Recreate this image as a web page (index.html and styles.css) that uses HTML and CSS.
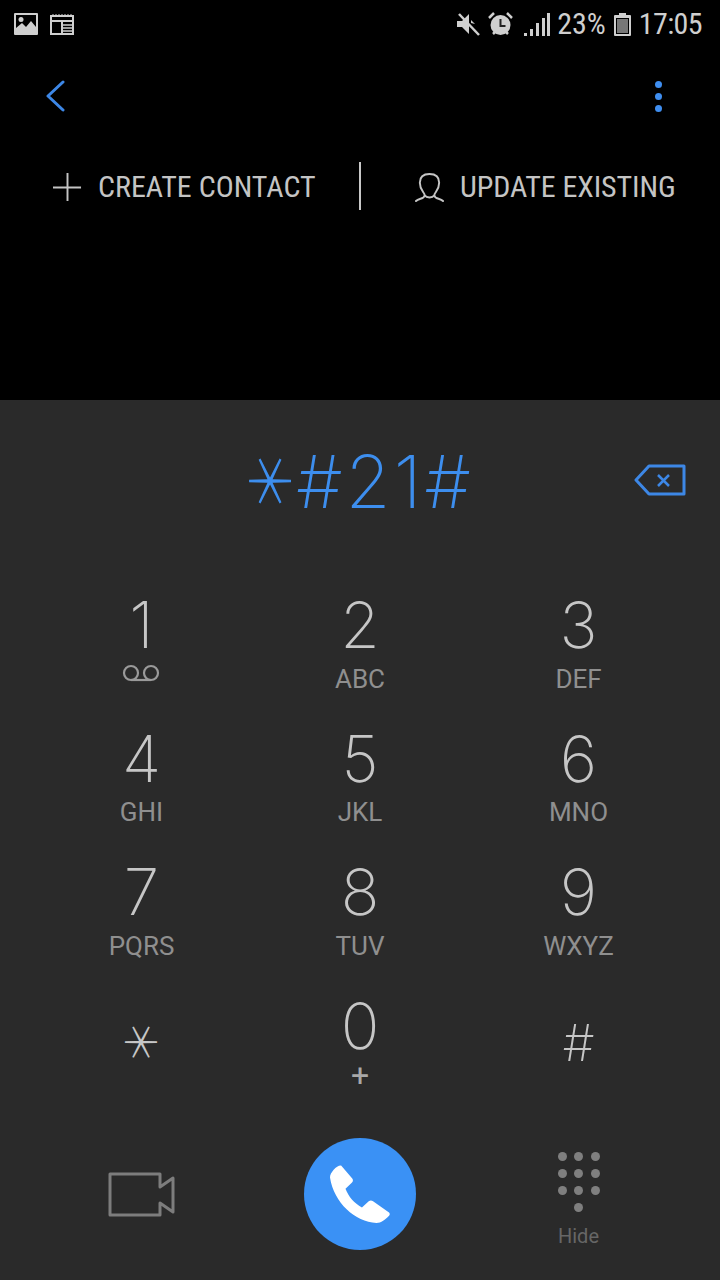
FILE: index.html
```html
<!DOCTYPE html>
<html lang="en">
<head>
<meta charset="utf-8">
<title>Phone</title>
<link rel="stylesheet" href="styles.css">
</head>
<body>
<main class="phone">
  <section class="top">
    <header class="status">
      <div class="status-group status-left">
        <svg class="ic-pic" viewBox="0 0 24 22"><path fill="#cfcfcf" fill-rule="evenodd" d="M1 0h22a1 1 0 0 1 1 1v20a1 1 0 0 1-1 1H1a1 1 0 0 1-1-1V1a1 1 0 0 1 1-1zM2 2v13l6-5 4 4 5-6 5 6V2z"/><circle cx="7" cy="6.500" r="2.500" fill="#cfcfcf"/></svg>
        <svg class="ic-news" viewBox="0 0 24 21"><g fill="none" stroke="#cfcfcf" stroke-width="2"><rect x="1" y="2" width="22" height="18"/><path d="M1 7h22M12 7v13"/></g><path stroke="#cfcfcf" stroke-width="1.500" d="M13 11h9M13 14h9M13 17h9"/><path stroke="#cfcfcf" stroke-width="1" d="M3 0v2M6 0v2M9 0v2M12 0v2M15 0v2M18 0v2M21 0v2"/></svg>
      </div>
      <div class="status-group status-right">
        <svg class="ic-mute" viewBox="0 0 23 23"><path fill="#cfcfcf" d="M0 8h5l7-7v20l-7-7H0zM14 7l4 4-4-1z"/><path stroke="#cfcfcf" stroke-width="2.500" d="M2 1l20 21"/></svg>
        <svg class="ic-alarm" viewBox="0 0 25 24"><circle cx="12.500" cy="13" r="10" fill="#cfcfcf"/><path fill="none" stroke="#222" stroke-width="2" d="M12.500 7v7h5"/><path fill="none" stroke="#cfcfcf" stroke-width="2.500" d="M1 6l5-5M24 6l-5-5M5 22l2-2M20 22l-2-2"/></svg>
        <svg class="ic-signal" viewBox="0 0 26 23"><path fill="#cfcfcf" d="M0 20h3v3H0zM6 16h3v7H6zM12 10h3v13h-3zM18 5h3v18h-3zM23 0h3v23h-3z"/></svg>
        <span class="status-text pct">23%</span>
        <svg class="ic-batt" viewBox="0 0 17 23"><path fill="#cfcfcf" fill-rule="evenodd" d="M5 0h7v2h4a1 1 0 0 1 1 1v19a1 1 0 0 1-1 1H1a1 1 0 0 1-1-1V3a1 1 0 0 1 1-1h4zM2 5v16h13V5z"/><rect x="3" y="6" width="11" height="14" fill="#777"/></svg>
        <span class="status-text time">17:05</span>
      </div>
    </header>
    <nav class="toolbar">
      <svg class="ic-back" viewBox="0 0 20 32"><path fill="none" stroke="#3d87e6" stroke-width="3" stroke-linecap="round" stroke-linejoin="round" d="M18 2L3 16l15 14"/></svg>
      <div class="more"><i></i><i></i><i></i></div>
    </nav>
    <div class="actions">
      <div class="action action-create">
        <svg class="ic-plus" viewBox="0 0 30 30"><path stroke="#c4c4c4" stroke-width="2" d="M0 15h29M15 0v29"/></svg>
        <span>CREATE CONTACT</span>
      </div>
      <div class="divider"></div>
      <div class="action action-update">
        <svg class="ic-person" viewBox="0 0 30 30"><path fill="none" stroke="#c4c4c4" stroke-width="2" stroke-linecap="round" d="M1 29C4 26 10 27 10 23 10 20 5 18 5 10 5 4 9 1 15 1 21 1 25 4 25 10 25 18 20 20 20 23 20 27 26 26 29 29M10 23C12 26 18 26 20 23"/></svg>
        <span>UPDATE EXISTING</span>
      </div>
    </div>
  </section>
  <section class="dialer">
    <div class="display">
      <div class="number"><span class="star star-big">＊</span><span class="number-text">#21#</span></div>
      <svg class="ic-del" viewBox="0 0 52 32"><g fill="none" stroke="#3d87e6" stroke-width="3" stroke-linejoin="round"><path d="M15 2h35v28H15L2 16z"/><path stroke-width="2.500" d="M24 11l11 11M35 11L24 22"/></g></svg>
    </div>
    <div class="keypad">
      <div class="key"><div class="digit">1</div><div class="sub"><svg class="ic-vm" viewBox="0 0 38 18"><g fill="none" stroke="#9a9a9a" stroke-width="2.200"><circle cx="9" cy="9" r="7"/><circle cx="29" cy="9" r="7"/><path d="M9 16h20"/></g></svg></div></div>
      <div class="key"><div class="digit">2</div><div class="sub">ABC</div></div>
      <div class="key"><div class="digit">3</div><div class="sub">DEF</div></div>
      <div class="key"><div class="digit">4</div><div class="sub">GHI</div></div>
      <div class="key"><div class="digit">5</div><div class="sub">JKL</div></div>
      <div class="key"><div class="digit">6</div><div class="sub">MNO</div></div>
      <div class="key"><div class="digit">7</div><div class="sub">PQRS</div></div>
      <div class="key"><div class="digit">8</div><div class="sub">TUV</div></div>
      <div class="key"><div class="digit">9</div><div class="sub">WXYZ</div></div>
      <div class="key"><div class="symbol"><span class="star star-key">＊</span></div></div>
      <div class="key"><div class="digit">0</div><div class="sub plus">+</div></div>
      <div class="key"><div class="symbol">#</div></div>
    </div>
    <div class="bottom">
      <div class="slot">
        <svg class="ic-video" viewBox="0 0 67 45"><path fill="none" stroke="#7d7d7d" stroke-width="3" stroke-linejoin="round" d="M2 2H52V15L65 6V40L52 31V43H2Z"/></svg>
      </div>
      <div class="slot">
        <div class="call">
          <svg class="ic-phone" viewBox="0 0 62 62"><path fill="#fff" d="M11.700 1.700L23 15c1 1.500 1 3-.5 4.500L16 25.700c3 8 9 15 17 19.300l7-6.500c1.500-1 3-1 4.500 0L61 50c1 1 1 2.500 0 3.500-4 4-8 7.500-13 7.500C26 60 4 40 0 14 0 9 7 1 11.700 1.700z"/></svg>
        </div>
      </div>
      <div class="slot hide">
        <div class="dots"><i></i><i></i><i></i><i></i><i></i><i></i><i></i><i></i><i></i><i class="last"></i></div>
        <div class="hide-label">Hide</div>
      </div>
    </div>
  </section>
</main>
</body>
</html>
```

FILE: styles.css
```css
* { box-sizing: border-box; }
html, body { margin: 0; padding: 0; background: #000; }
body { width: 720px; height: 1280px; overflow: hidden; font-family: Roboto, "Liberation Sans", sans-serif; }
.phone { width: 720px; height: 1280px; display: flex; flex-direction: column; }
svg { display: block; flex: none; }

.top { height: 400px; background: #000; }
.status { height: 48px; display: flex; justify-content: space-between; align-items: center; padding: 0 18px 0 14px; }
.status-group { display: flex; align-items: center; }
.status-left { gap: 12px; }
.ic-pic { width: 24px; height: 22px; }
.ic-news { width: 24px; height: 21px; }
.ic-mute { width: 23px; height: 23px; margin-right: 8px; }
.ic-alarm { width: 25px; height: 24px; margin-right: 11px; }
.ic-signal { width: 26px; height: 23px; margin-right: 7px; }
.ic-batt { width: 17px; height: 23px; margin: 0 8px; }
.status-text { font-size: 30px; line-height: 48px; color: #cfcfcf; font-stretch: 75%; }
.time { letter-spacing: -0.6px; }

.toolbar { height: 96px; display: flex; justify-content: space-between; align-items: center; padding: 0 58px 0 45px; }
.ic-back { width: 20px; height: 32px; }
.more { display: flex; flex-direction: column; gap: 5px; }
.more i { width: 7px; height: 7px; border-radius: 50%; background: #3f8ef0; }

.actions { height: 84px; display: grid; grid-template-columns: 1fr 2px 1fr; align-items: center; }
.action { display: flex; align-items: center; color: #c4c4c4; font-size: 30px; line-height: 36px; font-stretch: 75%; padding-top: 2px; }
.action-create { padding-left: 53px; gap: 16px; }
.action-update { padding-left: 54px; gap: 16px; letter-spacing: -0.1px; }
.ic-plus { width: 29px; height: 29px; }
.ic-person { width: 29px; height: 29px; }
.divider { width: 2px; height: 48px; background: #c8c8c8; }

.dialer { flex: 1; background: #2a2a2a; }
.display { height: 164px; position: relative; display: flex; align-items: center; justify-content: center; }
.number { display: flex; align-items: center; margin-left: 3px; font-family: Inter, Roboto, sans-serif; font-weight: 200; font-size: 73px; color: #3d8eee; line-height: 100px; }
.number-text { letter-spacing: 3px; }
.star { display: flex; align-items: center; justify-content: center; line-height: 1; font-family: "Noto Sans CJK SC", sans-serif; font-weight: 300; }
.star-big { width: 42px; height: 42px; margin-right: 5px; font-size: 55px; transform: translate(3.500px, -1px) rotate(90deg) scaleX(1.2); }
.ic-del { position: absolute; right: 34px; top: 64px; width: 52px; height: 32px; }

.keypad { margin-top: 28px; display: grid; grid-template-columns: 219px 218px 219px; padding-left: 32px; grid-auto-rows: 133.6px; }
.key { display: flex; flex-direction: column; align-items: center; }
.digit { height: 66px; line-height: 66px; font-family: Inter, Roboto, sans-serif; font-weight: 200; font-size: 64px; color: #c6c6c6; }
.sub { margin-top: 6.500px; height: 28px; line-height: 28px; font-size: 26px; color: #8f8f8f; display: flex; align-items: center; }
.ic-vm { width: 38px; height: 18px; margin-top: -11px; margin-left: -1px; }
.plus { font-weight: 400; font-size: 32px; color: #a8a8a8; margin-top: 3px; height: 26px; line-height: 26px; }
.symbol { display: flex; align-items: center; justify-content: center; margin-top: 17px; height: 66px; line-height: 66px; font-family: Inter, Roboto, sans-serif; font-weight: 200; font-size: 50px; color: #c6c6c6; }
.star-key { width: 34px; height: 34px; font-size: 42px; transform: translate(1px, -1px) rotate(90deg) scaleX(1.1); }

.bottom { margin-top: 12px; display: grid; grid-template-columns: 219px 218px 219px; padding-left: 32px; height: 112px; }
.slot { display: flex; flex-direction: column; align-items: center; justify-content: center; }
.ic-video { width: 67px; height: 45px; }
.call { width: 112px; height: 112px; border-radius: 50%; background: #3a91f5; display: flex; align-items: center; justify-content: center; }
.ic-phone { width: 60px; height: 60px; }
.hide { justify-content: flex-start; padding-top: 14px; }
.dots { width: 42px; display: grid; grid-template-columns: repeat(3, 9px); gap: 8px 7.500px; }
.dots i { width: 9px; height: 9px; border-radius: 50%; background: #7f7f7f; }
.dots .last { grid-column: 2; }
.hide-label { margin-top: 11px; font-size: 20px; line-height: 26px; color: #666; }
```
